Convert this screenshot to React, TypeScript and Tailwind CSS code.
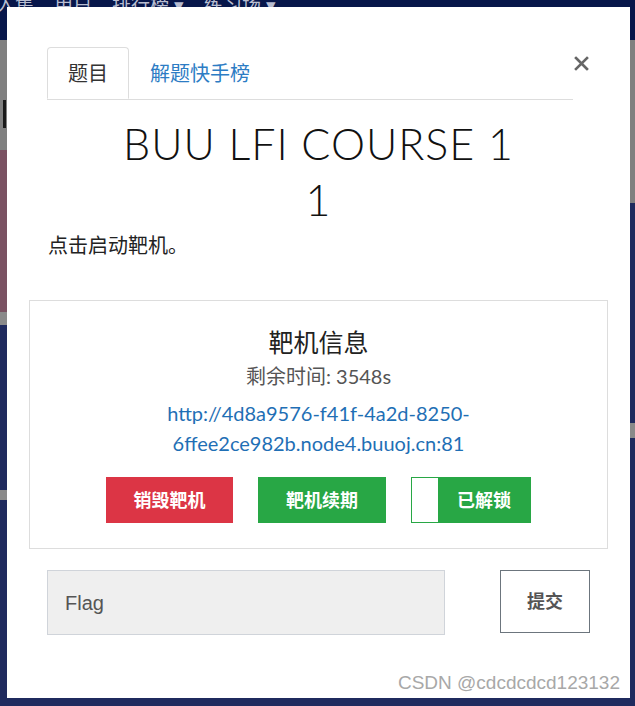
import React from "react";

const body = { fontFamily: 'Lato, "Noto Sans CJK SC", sans-serif' };

function Background() {
  return (
    <div className="absolute inset-0 flex flex-col bg-[#1f2a5e]">
      <div className="h-[40px] bg-[#07164a] relative overflow-hidden">
        <div className="absolute -top-[9px] -left-[4px] flex gap-[20px] text-[19px] text-[#b8bdd0]" style={body}>
          <span>入集</span>
          <span>用户</span>
          <span>排行榜 ▾</span>
          <span>练习场 ▾</span>
        </div>
      </div>
      <div className="flex flex-1 justify-between">
        <div className="w-[7px] flex flex-col">
          <div className="h-[60px] bg-[#808080]" />
          <div className="h-[28px] bg-[#808080] flex">
            <div className="w-[3px]" />
            <div className="w-[3px] bg-[#1a1a1a]" />
          </div>
          <div className="h-[22px] bg-[#808080]" />
          <div className="h-[162px] bg-[#7a5262]" />
          <div className="h-[13px] bg-[#8a8a8a]" />
          <div className="h-[165px] bg-[#1f2a5e]" />
          <div className="h-[10px] bg-[#8a8a8a]" />
          <div className="flex-1 bg-[#1f2a5e]" />
        </div>
        <div className="w-[5px] flex flex-col">
          <div className="h-[163px] bg-[#808080]" />
          <div className="h-[220px] bg-[#1f2a5e]" />
          <div className="h-[15px] bg-[#8a8a8a]" />
          <div className="flex-1 bg-[#1f2a5e]" />
        </div>
      </div>
    </div>
  );
}

function Modal() {
  return (
    <div className="absolute left-[7px] top-[7px] w-[623px] h-[691px] bg-white px-[22px]" style={body}>
      {/* tabs */}
      <div className="flex items-start pt-[40px] pl-[18px]">
        <div className="flex flex-1 border-b border-[#dddddd]">
          <div className="h-[52px] -mb-px px-[20px] flex items-center border border-[#dddddd] border-b-white rounded-t-[4px] bg-white text-[20px] text-[#333]">
            题目
          </div>
          <div className="h-[52px] px-[21px] flex items-center text-[20px] text-[#2c7cc4]">
            解题快手榜
          </div>
        </div>
        <button className="mt-[9px] ml-px mr-[19px] w-[15px] h-[15px] flex items-center justify-center">
          <svg width="15" height="15" viewBox="0 0 15 15">
            <path d="M2 2L13 13M13 2L2 13" stroke="#666" strokeWidth="2.6" strokeLinecap="square" />
          </svg>
        </button>
      </div>

      {/* title */}
      <div className="mt-[16px] text-center text-[#111] font-light text-[43px] leading-[56px] tracking-[1px]">
        <div>BUU LFI COURSE 1</div>
        <div>1</div>
      </div>

      <p className="mt-[4px] ml-[19px] text-[20px] leading-[27px] text-[#222]">点击启动靶机。</p>

      {/* instance card */}
      <div className="mt-[41px] border border-[#dddddd] pt-[25px] pb-[25px] flex flex-col items-center">
        <div className="text-[25px] leading-[32px] text-[#222]">靶机信息</div>
        <div className="mt-[5px] text-[20px] leading-[27px] text-[#555]">剩余时间: 3548s</div>
        <div className="mt-[8px] text-[20px] leading-[30px] text-[#1f6fb5] text-center">
          <div>http://4d8a9576-f41f-4a2d-8250-</div>
          <div>6ffee2ce982b.node4.buuoj.cn:81</div>
        </div>
        <div className="mt-[19px] flex gap-[25px] items-start">
          <button className="w-[127px] h-[46px] bg-[#dc3545] text-white font-bold text-[18px]">销毁靶机</button>
          <button className="w-[128px] h-[46px] bg-[#28a745] text-white font-bold text-[18px]">靶机续期</button>
          <button className="w-[120px] h-[46px] bg-[#28a745] border border-[#28a745] flex">
            <span className="w-[26px] h-full bg-white" />
            <span className="flex-1 flex items-center justify-center text-white font-bold text-[18px]">已解锁</span>
          </button>
        </div>
      </div>

      {/* flag form */}
      <div className="mt-[21px] flex items-start">
        <div className="ml-[18px] w-[398px] h-[65px] bg-[#efefef] border border-[#d0d4da] flex items-center px-[17px] text-[20px] text-[#555]" style={{ fontFamily: '"Liberation Sans", sans-serif' }}>
          Flag
        </div>
        <button className="ml-[55px] w-[90px] h-[63px] border border-[#6c757d] bg-white text-[18px] font-bold text-[#555]">
          提交
        </button>
      </div>

      <div className="absolute right-[10px] bottom-[1px] text-[19px] text-[#a8a8a8]" style={{ fontFamily: '"Liberation Sans", "Noto Sans CJK SC", sans-serif' }}>
        CSDN @cdcdcdcd123132
      </div>
    </div>
  );
}

export default function App() {
  return (
    <div className="relative w-[635px] h-[706px] overflow-hidden">
      <Background />
      <Modal />
    </div>
  );
}
